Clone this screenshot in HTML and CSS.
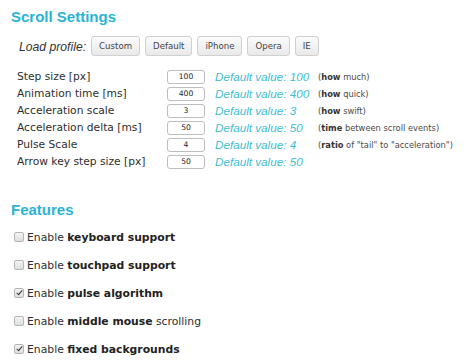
FILE: index.html
```html
<!DOCTYPE html>
<html>
<head>
<meta charset="utf-8">
<link rel="stylesheet" href="styles.css">
</head>
<body>
<div class="page">
  <h2 class="title">Scroll Settings</h2>
  <div class="profile">
    <span class="profile-label">Load profile:</span>
    <button class="btn">Custom</button>
    <button class="btn">Default</button>
    <button class="btn">iPhone</button>
    <button class="btn">Opera</button>
    <button class="btn">IE</button>
  </div>
  <div class="settings">
    <div class="label">Step size [px]</div><div class="inp">100</div><div class="def">Default value: 100</div><div class="note">(<b>how</b> much)</div>
    <div class="label">Animation time [ms]</div><div class="inp">400</div><div class="def">Default value: 400</div><div class="note">(<b>how</b> quick)</div>
    <div class="label">Acceleration scale</div><div class="inp">3</div><div class="def">Default value: 3</div><div class="note">(<b>how</b> swift)</div>
    <div class="label">Acceleration delta [ms]</div><div class="inp">50</div><div class="def">Default value: 50</div><div class="note">(<b>time</b> between scroll events)</div>
    <div class="label">Pulse Scale</div><div class="inp">4</div><div class="def">Default value: 4</div><div class="note">(<b>ratio</b> of "tail" to "acceleration")</div>
    <div class="label">Arrow key step size [px]</div><div class="inp">50</div><div class="def">Default value: 50</div><div class="note"></div>
  </div>
  <h2 class="title features">Features</h2>
  <ul class="checks">
    <li><span class="cb"></span><span class="txt">Enable <b>keyboard support</b></span></li>
    <li><span class="cb"></span><span class="txt">Enable <b>touchpad support</b></span></li>
    <li><span class="cb on"></span><span class="txt">Enable <b>pulse algorithm</b></span></li>
    <li><span class="cb"></span><span class="txt">Enable <b>middle mouse</b> scrolling</span></li>
    <li><span class="cb on"></span><span class="txt">Enable <b>fixed backgrounds</b></span></li>
  </ul>
</div>
</body>
</html>
```
FILE: styles.css
```css
html, body { margin: 0; padding: 0; background: #fff; }
body { font-family: "DejaVu Sans", Verdana, sans-serif; color: #333; }
.page { padding: 8px 0 0 11px; }
.title { margin: 0; font-family: "Liberation Sans", Arial, sans-serif; font-size: 15px; font-weight: bold; color: #2bb3d4; line-height: 18px; }
.profile { display: flex; align-items: center; gap: 5px; margin: 10px 0 0 8px; height: 20px; }
.profile-label { font-family: "Liberation Sans", Arial, sans-serif; font-style: italic; font-size: 12.2px; color: #333; position: relative; top: 1px; }
.btn { font-family: "DejaVu Sans", Verdana, sans-serif; font-size: 8.6px; color: #444; background: linear-gradient(#fbfbfb, #e9e9e9); border: 1px solid #d0d0d0; border-radius: 3px; height: 20px; padding: 0 7px; margin: 0; }
.settings { display: grid; grid-template-columns: 150px 38px 113px auto; grid-auto-rows: 17px; margin: 12px 0 0 6px; align-items: center; }
.label { font-size: 10.7px; color: #2e2e2e; line-height: 14px; white-space: nowrap; }
.inp { box-sizing: border-box; height: 14px; border: 1px solid #bdbdbd; border-radius: 3px; font-size: 7.6px; text-align: center; line-height: 12px; color: #222; }
.def { font-family: "Liberation Sans", Arial, sans-serif; font-style: italic; color: #40bdcf; font-size: 11.7px; padding-left: 10px; line-height: 14px; white-space: nowrap; }
.note { font-size: 8.3px; color: #4a4a4a; white-space: nowrap; }
.note b { color: #333; }
.features { margin-top: 31px; }
.checks { list-style: none; margin: 5px 0 0 3px; padding: 0; }
.checks li { font-size: 10.8px; color: #2e2e2e; height: 28px; line-height: 28px; white-space: nowrap; }
.checks li b { color: #222; }
.cb { display: inline-block; box-sizing: border-box; width: 10px; height: 10px; border: 1px solid #b5b5b5; border-radius: 2px; background: linear-gradient(#f4f4f4, #dedede); margin-right: 3px; position: relative; vertical-align: -1px; }
.cb.on::after { content: ""; position: absolute; left: 2.5px; top: 0px; width: 2px; height: 5px; border: solid #333; border-width: 0 1.6px 1.6px 0; transform: rotate(40deg); }
```
